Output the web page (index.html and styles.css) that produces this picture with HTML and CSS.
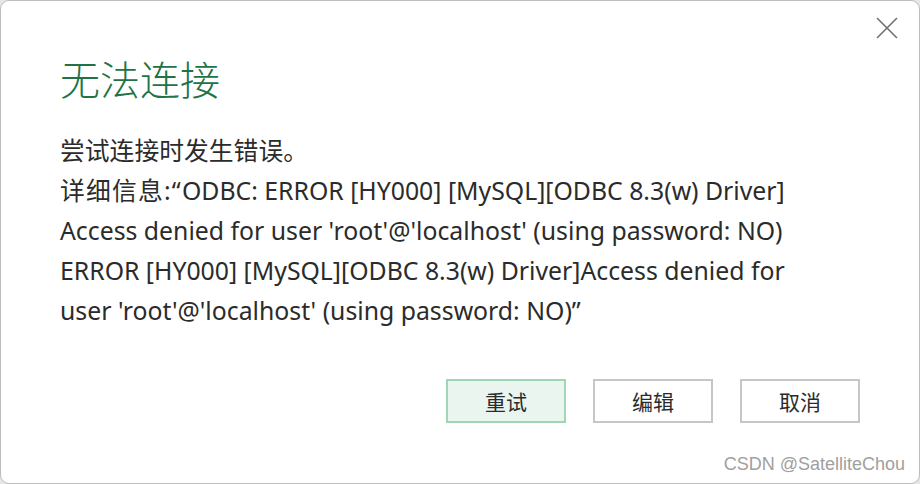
FILE: index.html
```html
<!DOCTYPE html>
<html lang="zh-CN">
<head>
<meta charset="utf-8">
<title>无法连接</title>
<link rel="stylesheet" href="styles.css">
</head>
<body>
<div class="dialog">
  <button class="close" aria-label="关闭">
    <svg width="22" height="22" viewBox="0 0 22 22"><path d="M1 1 L21 21 M21 1 L1 21" stroke="#707070" stroke-width="1.6" fill="none"/></svg>
  </button>
  <h1 class="title">无法连接</h1>
  <div class="message">
    <div>尝试连接时发生错误。</div>
    <div><span class="lead">详细信息:“</span>ODBC: ERROR [HY000] [MySQL][ODBC 8.3(w) Driver]<br>Access denied for user 'root'@'localhost' (using password: NO)<br>ERROR [HY000] [MySQL][ODBC 8.3(w) Driver]Access denied for<br>user 'root'@'localhost' (using password: NO)”</div>
  </div>
  <div class="actions">
    <button class="btn primary">重试</button>
    <button class="btn">编辑</button>
    <button class="btn">取消</button>
  </div>
  <div class="watermark">CSDN @SatelliteChou</div>
</div>
</body>
</html>
```
FILE: styles.css
```css
html, body {
  margin: 0;
  padding: 0;
  background: #e6e6e6;
}
.dialog {
  box-sizing: border-box;
  position: relative;
  width: 920px;
  height: 484px;
  background: #ffffff;
  border: 1px solid #bdbdbd;
  border-radius: 9px;
  padding: 51px 59px 0 59px;
  display: flex;
  flex-direction: column;
  font-family: "Noto Sans", "Noto Sans CJK SC", sans-serif;
  color: #2b2b2b;
}
.close {
  position: absolute;
  top: 15px;
  right: 20px;
  width: 24px;
  height: 24px;
  padding: 0;
  border: none;
  background: transparent;
  display: flex;
  align-items: center;
  justify-content: center;
}
.title {
  margin: 0;
  font-size: 40px;
  line-height: 56px;
  font-weight: 300;
  color: #217346;
}
.message {
  margin-top: 22px;
  font-size: 24.8px;
  line-height: 40px;
  white-space: nowrap;
}
.lead {
  letter-spacing: 1.2px;
}
.actions {
  margin-top: 49px;
  display: flex;
  justify-content: flex-end;
  gap: 27px;
}
.btn {
  box-sizing: border-box;
  width: 120px;
  height: 44px;
  border: 2px solid #c6c6c6;
  background: #ffffff;
  font-family: "Noto Sans CJK SC", sans-serif;
  font-size: 21px;
  color: #2b2b2b;
  padding: 0;
}
.btn.primary {
  background: #e9f5ee;
  border-color: #9fd6b4;
}
.watermark {
  position: absolute;
  right: 14px;
  bottom: 8px;
  font-family: "Liberation Sans", Arial, sans-serif;
  font-size: 18px;
  color: #a0a0a0;
}
```
